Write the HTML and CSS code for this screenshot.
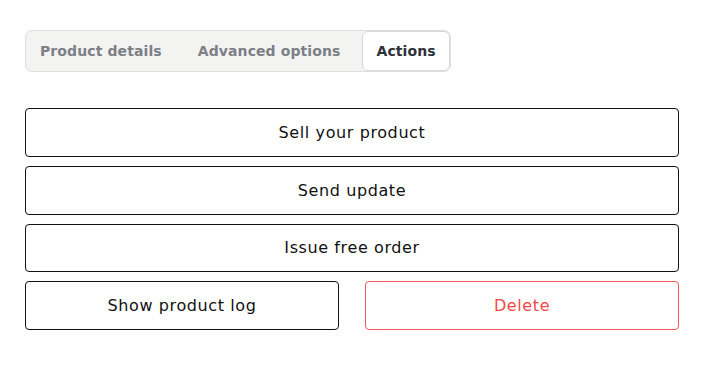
FILE: index.html
```html
<!DOCTYPE html>
<html>
<head>
<meta charset="UTF-8">
<meta name="viewport" content="width=device-width, initial-scale=1.0">
<link rel="stylesheet" href="styles.css">
</head>
<body>
<div class="panel">
	<div class="tabs">
		<div class="tab">Product details</div>
		<div class="tab">Advanced options</div>
		<div class="tab active">Actions</div>
	</div>

	<div class="actions">
		<button class="action">Sell your product</button>
		<button class="action">Send update</button>
		<button class="action">Issue free order</button>
		<div class="row">
			<button class="action">Show product log</button>
			<button class="action danger">Delete</button>
		</div>
	</div>
</div>
</body>
</html>
```

FILE: styles.css
```css
body {
	margin: 0;
	font-family: 'DejaVu Sans', sans-serif;
	color: #111;
	background-color: white;
}

.panel {
	padding: 30px 27px 0 25px;
}

.tabs {
	display: inline-flex;
	gap: 8px;
	background-color: #f3f3f2;
	border: 1px solid #dedede;
	border-radius: 7px;
}

.tab {
	padding: 0 13px;
	height: 40px;
	line-height: 38px;
	font-size: 14px;
	font-weight: 600;
	letter-spacing: 0.1px;
	color: #7c7f86;
	border-radius: 6px;
	border: 1px solid transparent;
	box-sizing: border-box;
}

.tab.active {
	background-color: white;
	color: #2e3138;
	border-color: #d8d8d8;
}

.actions {
	display: flex;
	flex-direction: column;
	gap: 9px;
	margin-top: 36px;
}

.row {
	display: flex;
	gap: 26px;
}

.row .action {
	flex: 1;
}

.action {
	height: 48.8px;
	font-family: inherit;
	font-size: 16px;
	letter-spacing: 0.6px;
	color: #111;
	background-color: white;
	border: 1px solid #111;
	border-radius: 4px;
}

.action.danger {
	color: #f3474a;
	border-color: #f3585b;
}
```
